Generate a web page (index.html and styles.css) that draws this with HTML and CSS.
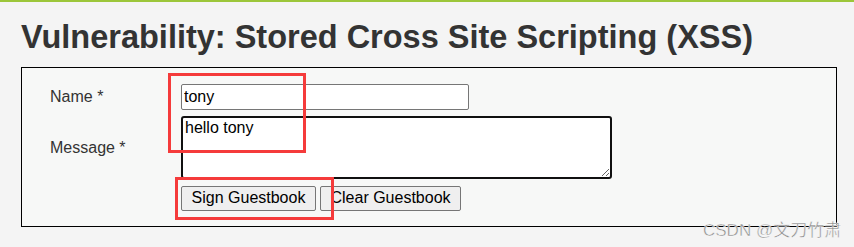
FILE: index.html
```html
<!DOCTYPE html>
<html>
<head>
<meta charset="utf-8">
<link rel="stylesheet" href="styles.css">
</head>
<body>
<div class="topbar"></div>
<div class="main">
  <h1 class="title">Vulnerability: Stored Cross Site Scripting (XSS)</h1>
  <div class="code-area">
    <form class="guest-form">
      <label class="field-label" for="name">Name *</label>
      <div class="field"><input id="name" class="text-input" type="text" value="tony"></div>
      <label class="field-label" for="msg">Message *</label>
      <div class="field"><textarea id="msg" class="msg-input">hello tony</textarea></div>
      <div></div>
      <div class="buttons">
        <button type="button" class="btn btn-sign">Sign Guestbook</button>
        <button type="button" class="btn btn-clear">Clear Guestbook</button>
      </div>
    </form>
  </div>
</div>
<div class="mark mark-one"></div>
<div class="mark mark-two"></div>
<div class="watermark">CSDN @文刀竹肃</div>
</body>
</html>
```
FILE: styles.css
```css
html, body {
  margin: 0;
  padding: 0;
}
body {
  background: #f4f4f4;
  font-family: "Liberation Sans", Arial, sans-serif;
  color: #333;
  position: relative;
  width: 854px;
  height: 247px;
  overflow: hidden;
}
.topbar {
  height: 2px;
  background: #9cc63a;
}
.main {
  padding: 0 17px 0 21px;
}
.title {
  margin: 14px 0 0 0;
  font-size: 32.5px;
  line-height: 42px;
  font-weight: bold;
  color: #333;
  letter-spacing: 0;
}
.code-area {
  margin-top: 9px;
  border: 1px solid #000;
  background: #f7f8f7;
  height: 158px;
  box-sizing: content-box;
}
.guest-form {
  display: grid;
  grid-template-columns: 131px auto;
  grid-template-rows: 26px 63px 25px;
  row-gap: 6px;
  padding: 16px 0 0 28px;
  align-items: center;
}
.guest-form > :nth-child(5),
.guest-form > :nth-child(6) {
  margin-top: 1px;
}
.field-label {
  font-size: 16px;
  color: #333;
}
.field {
  display: flex;
}
.text-input {
  width: 288px;
  height: 26px;
  box-sizing: border-box;
  border: 1px solid #767676;
  border-radius: 2px;
  padding: 1px 2px;
  background: #fff;
  font-family: "Liberation Sans", Arial, sans-serif;
  font-size: 16px;
  color: #000;
  margin: 0;
}
.msg-input {
  width: 431px;
  height: 63px;
  box-sizing: border-box;
  border: 2px solid #101010;
  border-radius: 3px;
  padding: 1px 2px;
  background: #fff;
  font-family: "Liberation Sans", Arial, sans-serif;
  font-size: 16px;
  line-height: 18px;
  color: #000;
  margin: 0;
  resize: both;
  outline: none;
}
.buttons {
  display: flex;
  gap: 4px;
}
.btn {
  height: 25px;
  box-sizing: border-box;
  border: 1px solid #767676;
  border-radius: 2px;
  background: #efefef;
  font-family: "Liberation Sans", Arial, sans-serif;
  font-size: 16px;
  color: #000;
  padding: 0 8px;
  margin: 0;
}
.btn-sign { width: 135px; }
.btn-clear { width: 141px; }
.mark {
  position: absolute;
  border: 3px solid #f53b3b;
  box-sizing: border-box;
}
.mark-one {
  left: 168px;
  top: 73px;
  width: 138px;
  height: 80px;
}
.mark-two {
  left: 175px;
  top: 177px;
  width: 159px;
  height: 43px;
}
.watermark {
  position: absolute;
  left: 703px;
  top: 220px;
  font-family: "Liberation Sans", "Noto Sans CJK SC", sans-serif;
  font-size: 17px;
  line-height: 21px;
  color: #8a8a8a;
  -webkit-text-stroke: 0.4px #fff;
}
```
